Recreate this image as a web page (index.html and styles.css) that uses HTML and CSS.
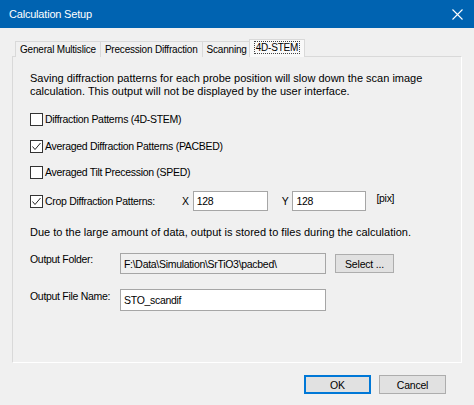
FILE: index.html
```html
<!DOCTYPE html>
<html lang="en">
<head>
    <meta charset="UTF-8">
    <meta name="viewport" content="width=device-width, initial-scale=1.0">
    <title>Calculation Setup</title>
    <link rel="stylesheet" href="styles.css">
</head>
<body>
    <div class="window">
        <div class="titlebar">
            <span class="title">Calculation Setup</span>
            <svg class="close" width="11" height="11" viewBox="0 0 11 11">
                <path d="M0.5 0.5 L10.5 10.5 M10.5 0.5 L0.5 10.5" stroke="#fff" stroke-width="1.1" fill="none"/>
            </svg>
        </div>

        <div class="client">
            <!-- Tabs -->
            <div class="tabs">
                <div class="tab">General Multislice</div>
                <div class="tab">Precession Diffraction</div>
                <div class="tab">Scanning</div>
                <div class="tab active"><span class="focus">4D-STEM</span></div>
            </div>

            <div class="panel">
                <p class="note">Saving diffraction patterns for each probe position will slow down the scan image calculation. This output will not be displayed by the user interface.</p>

                <div class="check-row row-1">
                    <span class="box"></span>
                    <span>Diffraction Patterns (4D-STEM)</span>
                </div>
                <div class="check-row row-2">
                    <span class="box">
                        <svg width="13" height="13" viewBox="0 0 13 13"><path d="M2.5 6.5 L5 9.5 L10.5 3" stroke="#222" stroke-width="1" fill="none"/></svg>
                    </span>
                    <span>Averaged Diffraction Patterns (PACBED)</span>
                </div>
                <div class="check-row row-3">
                    <span class="box"></span>
                    <span>Averaged Tilt Precession (SPED)</span>
                </div>
                <div class="check-row row-4">
                    <span class="box">
                        <svg width="13" height="13" viewBox="0 0 13 13"><path d="M2.5 6.5 L5 9.5 L10.5 3" stroke="#222" stroke-width="1" fill="none"/></svg>
                    </span>
                    <span class="crop-label">Crop Diffraction Patterns:</span>
                    <span class="axis">X</span>
                    <input class="field small" type="text" value="128">
                    <span class="axis axis-y">Y</span>
                    <input class="field small" type="text" value="128">
                    <span class="unit">[pix]</span>
                </div>

                <p class="note files">Due to the large amount of data, output is stored to files during the calculation.</p>

                <div class="form-row">
                    <label class="form-label">Output Folder:</label>
                    <input class="field wide readonly" type="text" value="F:\Data\Simulation\SrTiO3\pacbed\" readonly>
                    <button class="btn select">Select ...</button>
                </div>
                <div class="form-row name-row">
                    <label class="form-label">Output File Name:</label>
                    <input class="field wide tall" type="text" value="STO_scandif">
                </div>
            </div>

            <div class="buttons">
                <button class="btn default">OK</button>
                <button class="btn">Cancel</button>
            </div>
        </div>
    </div>
</body>
</html>
```

FILE: styles.css
```css
body {
    margin: 0;
    font-family: "Liberation Sans", Arial, sans-serif;
    font-size: 10.5px;
    letter-spacing: -0.3px;
    color: #000;
    background: #f0f0f0;
}
.window {
    width: 474px;
    height: 405px;
    background: #f0f0f0;
    overflow: hidden;
}
.titlebar {
    height: 28px;
    background: #0063b1;
    display: flex;
    align-items: center;
    justify-content: space-between;
    padding: 0 11px 0 9px;
}
.title {
    color: #fff;
    font-size: 11px;
    letter-spacing: -0.2px;
}
.client {
    padding: 11px 12px 0 12px;
}
.tabs {
    display: flex;
    align-items: flex-end;
    padding-left: 3px;
    height: 18px;
    position: relative;
    z-index: 1;
}
.tab {
    height: 15px;
    line-height: 15px;
    padding: 0 4px;
    border: 1px solid #d9d9d9;
    border-bottom: none;
    margin-right: -1px;
    background: #f0f0f0;
    white-space: nowrap;
    font-size: 10px;
    letter-spacing: -0.2px;
}
.tab.active {
    height: 17px;
    line-height: 16px;
    margin: 0 -1px 0 -2px;
    padding: 0 4px;
    background: #f9f9f9;
    border-color: #d9d9d9;
}
.focus {
    border: 1px dotted #444;
    padding: 0 1px;
}
.panel {
    height: 290px;
    border: 1px solid #d9d9d9;
    border-right-color: #fff;
    border-bottom-color: #fff;
    margin-top: -1px;
    padding: 15px 0 0 17px;
}
.note {
    margin: 0;
    line-height: 13px;
    width: 420px;
    font-size: 11px;
    letter-spacing: 0;
}
.check-row {
    display: flex;
    align-items: center;
    height: 13px;
    line-height: 13px;
}
.row-1 { margin-top: 15px; }
.row-2 { margin-top: 14px; }
.row-3 { margin-top: 13px; }
.row-4 {
    margin-top: 12px;
    height: 20px;
}
.box {
    width: 11px;
    height: 11px;
    border: 1px solid #333;
    background: #fff;
    margin-right: 2px;
    position: relative;
}
.box svg {
    position: absolute;
    left: -1px;
    top: -1px;
}
.crop-label {
    width: 137px;
}
.axis {
    margin-right: 4px;
}
.axis-y {
    margin-left: 14px;
    margin-right: 4px;
}
.unit {
    margin-left: 10px;
    margin-top: -6px;
}
.field {
    font-family: inherit;
    font-size: 10.5px;
    letter-spacing: -0.3px;
    border: 1px solid #a6a6a6;
    background: #fff;
    padding: 0 3px;
    margin: 0;
    outline: none;
    color: #000;
    box-sizing: border-box;
}
.small {
    width: 75px;
    height: 20px;
}
.small + .axis-y + .small {
    width: 74px;
}
.files {
    margin-top: 15px;
}
.form-row {
    display: flex;
    align-items: flex-start;
    margin-top: 14px;
}
.name-row {
    margin-top: 15px;
}
.form-label {
    width: 90px;
    line-height: 13px;
}
.name-row .form-label {
    padding-top: 1px;
}
.wide {
    width: 206px;
    height: 21px;
}
.tall {
    height: 22px;
}
.readonly {
    background: #f0f0f0;
}
.btn {
    font-family: inherit;
    font-size: 10.5px;
    letter-spacing: -0.2px;
    background: #e1e1e1;
    border: 1px solid #adadad;
    height: 19px;
    padding: 0;
    color: #000;
}
.select {
    width: 59px;
    margin-left: 9px;
    margin-top: 1px;
}
.buttons {
    display: flex;
    justify-content: flex-end;
    gap: 8px;
    padding: 12px 16px 0 0;
}
.buttons .btn {
    width: 67px;
}
.btn.default {
    border: 1px solid #0078d7;
    box-shadow: inset 0 0 0 1px #0078d7;
}
```
